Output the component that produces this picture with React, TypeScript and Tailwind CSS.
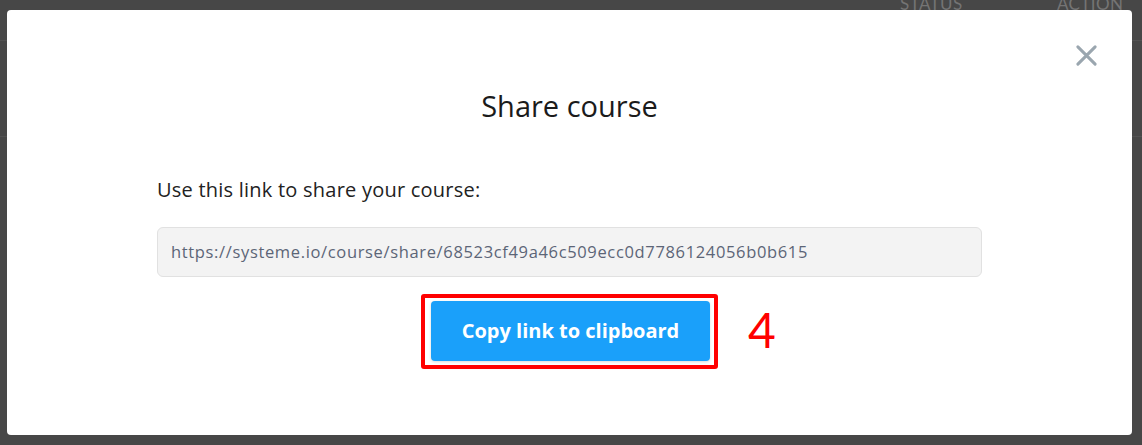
import React from 'react'

function BackgroundTable() {
  return (
    <div className="flex flex-col">
      <div className="h-[41px] border-b border-[#525252] relative">
        <span className="absolute left-[900px] top-[-9px] text-[17px] tracking-wide text-[#747474]">STATUS</span>
        <span className="absolute left-[1057px] top-[-9px] text-[17px] tracking-wide text-[#747474]">ACTION</span>
      </div>
      <div className="h-[96px] border-b border-[#525252]" />
    </div>
  )
}

function ShareCourseModal() {
  return (
    <div className="absolute left-[7px] top-[10px] w-[1125px] h-[425px] bg-white rounded-[4px] flex flex-col items-center px-[150px] pt-[77px] font-['Open_Sans','Lato',sans-serif]">
      <button className="absolute right-[34px] top-[34px] w-[23px] h-[23px] text-[#9aa6af]">
        <svg viewBox="0 0 24 24" className="w-full h-full" fill="none" stroke="currentColor" strokeWidth="3.2" strokeLinecap="round">
          <path d="M3 3L21 21M21 3L3 21" />
        </svg>
      </button>
      <h2 className="text-[29px] leading-[38px] text-[#1b1b1b]">Share course</h2>
      <div className="w-full mt-[51px]">
        <p className="text-[20px] leading-[27px] tracking-[0.23px] text-[#222]">Use this link to share your course:</p>
        <div className="mt-[24px] h-[50px] w-full bg-[#f3f3f3] border border-[#e1e1e1] rounded-[6px] flex items-center px-[13px]">
          <span className="text-[16.5px] tracking-[0.65px] text-[#5c6577]">https://systeme.io/course/share/68523cf49a46c509ecc0d7786124056b0b615</span>
        </div>
      </div>
      <div className="relative mt-[17px]">
        <div className="border-4 border-[#ff0000] rounded-[3px] pt-[3px] pb-1 pl-1.5 pr-1">
          <button className="w-[279px] h-[60px] bg-[#1aa0fa] rounded-[4px] text-white text-[20px] font-bold shadow-[0_1px_3px_rgba(0,0,0,0.15)]">
            Copy link to clipboard
          </button>
        </div>
        <span className="absolute left-[calc(100%+30px)] top-[8px] font-['Lato',sans-serif] text-[48px] leading-[56px] text-[#ff0000] font-normal">4</span>
      </div>
    </div>
  )
}

export default function App() {
  return (
    <div className="relative w-[1142px] h-[445px] overflow-hidden bg-[#474747] font-['Lato','Open_Sans',sans-serif]">
      <BackgroundTable />
      <ShareCourseModal />
    </div>
  )
}
